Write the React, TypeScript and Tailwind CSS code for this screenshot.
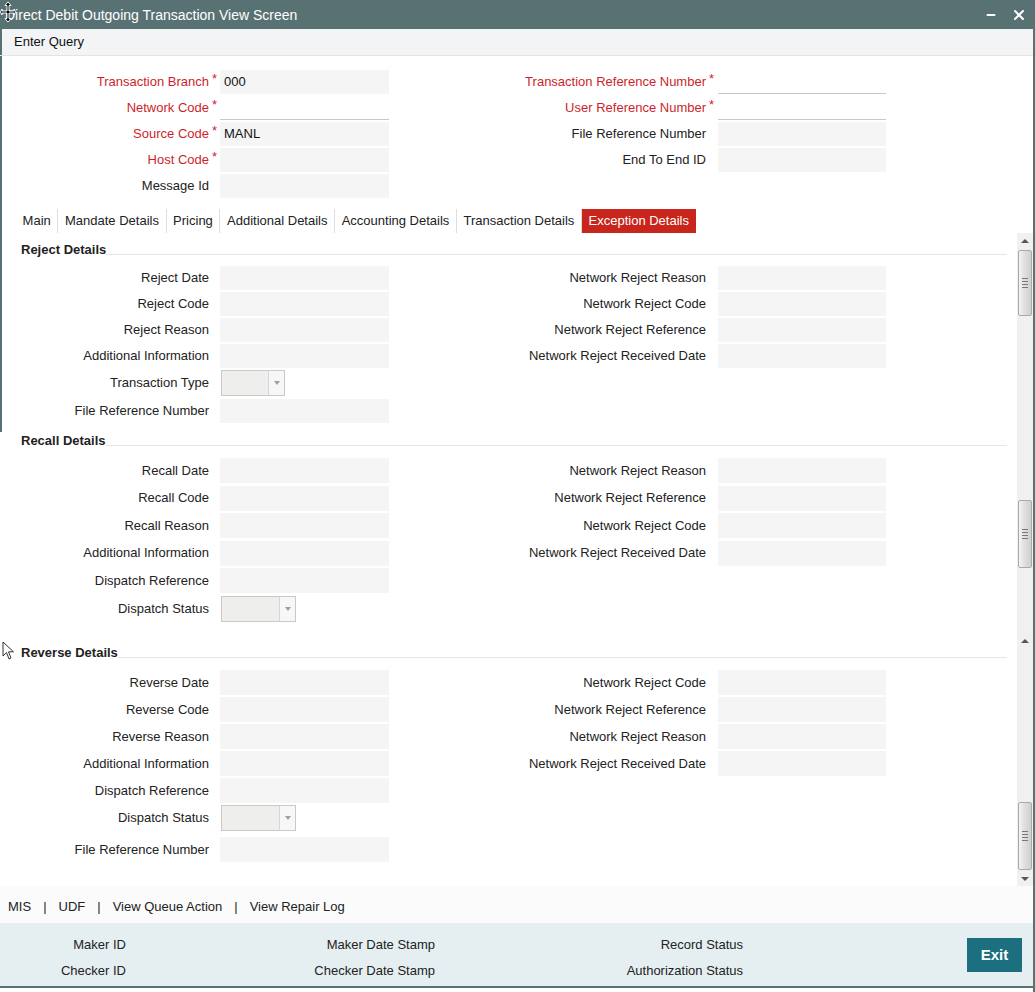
import React from "react";
import { Minus, X } from "lucide-react";

type Side = "left" | "right";

type FieldProps = {
  label: string;
  req?: boolean;
  value?: string;
  kind?: "input" | "white" | "select";
  selW?: string;
  side?: Side;
};

const Field = ({ label, req, value, kind = "input", selW = "w-[64px]", side = "left" }: FieldProps) => {
  const left = side === "left";
  return (
    <div className={`flex items-center h-full ${left ? "w-[389px]" : "w-[388px] ml-[109px]"}`}>
      <span
        className={`${left ? "w-[209px]" : "w-[208px]"} text-right whitespace-nowrap ${
          req ? "text-[#cc1f2b]" : "text-[#222]"
        }`}
      >
        {label}
      </span>
      <span className={`${left ? "w-[11px]" : "w-[12px]"} self-start pl-[3px] pt-[1px] text-[#cc1f2b] leading-[16px]`}>
        {req ? "*" : ""}
      </span>
      {kind === "select" ? (
        <div className={`${selW} h-full ml-[1px] border border-[#c9c9c9] bg-[#eeeeec] flex justify-end`}>
          <div className="w-[16px] h-full border-l border-[#d6d6d6] bg-[#f7f7f7] flex items-center justify-center">
            <div className="w-0 h-0 border-x-[3px] border-x-transparent border-t-[4px] border-t-[#a0a0a0]" />
          </div>
        </div>
      ) : kind === "white" ? (
        <div className="flex-1 h-full bg-white border-b border-[#c8c8c8]" />
      ) : (
        <div className="flex-1 h-full bg-[#f5f5f5] flex items-center pl-[4px] text-[#111]">{value}</div>
      )}
    </div>
  );
};

const Heading = ({ title, className }: { title: string; className: string }) => (
  <div className={`flex items-end pl-[21px] pr-[10px] ${className}`}>
    <span className="font-bold text-[#222] leading-[16px]">{title}</span>
    <div className="flex-1 h-px bg-[#e6e6e6] mb-[3px]" />
  </div>
);

const tabs = [
  "Main",
  "Mandate Details",
  "Pricing",
  "Additional Details",
  "Accounting Details",
  "Transaction Details",
  "Exception Details",
];

const Thumb = ({ className }: { className: string }) => (
  <div
    className={`mx-[1px] rounded-[2px] border border-[#a9a9a9] bg-gradient-to-r from-[#f4f4f4] via-[#dedede] to-[#cfcfcf] flex items-center justify-center ${className}`}
  >
    <div className="flex flex-col gap-[2px]">
      <div className="w-[6px] h-px bg-[#777]" />
      <div className="w-[6px] h-px bg-[#777]" />
      <div className="w-[6px] h-px bg-[#777]" />
      <div className="w-[6px] h-px bg-[#777]" />
    </div>
  </div>
);

const UpArrow = () => (
  <div className="h-[10px] flex items-center justify-center">
    <div className="w-0 h-0 border-x-[4px] border-x-transparent border-b-[4px] border-b-[#555]" />
  </div>
);

const DownArrow = () => (
  <div className="h-[10px] flex items-center justify-center">
    <div className="w-0 h-0 border-x-[4px] border-x-transparent border-t-[4px] border-t-[#555]" />
  </div>
);

const App = () => {
  return (
    <div className="relative w-[1035px] h-[992px] overflow-hidden bg-white flex flex-col text-[13px] font-['Liberation_Sans',Arial,sans-serif]">
      {/* title bar */}
      <div className="h-[29px] shrink-0 bg-[#587274] flex items-center justify-between pl-[5px] pr-[8px]">
        <span className="text-white text-[14px] pt-[1px]">Direct Debit Outgoing Transaction View Screen</span>
        <div className="flex items-center gap-[14px] text-white">
          <Minus size={12} strokeWidth={4} />
          <X size={16} strokeWidth={3} />
        </div>
      </div>

      <div className="flex-1 flex flex-col border-r-2 border-[#587274] min-h-0">
        <div className="shadow-[inset_2px_0_0_#587274]">
          <div className="h-[27px] bg-[#f3f4f5] border-b border-[#e4e4e4] flex items-center pl-[14px] text-[#111] shadow-[inset_2px_0_0_#587274]">
            Enter Query
          </div>

          {/* header fields */}
          <div className="pt-[14px] flex flex-col gap-[2px]">
            <div className="flex h-[24px]">
              <Field label="Transaction Branch" req value="000" />
              <Field label="Transaction Reference Number" req kind="white" side="right" />
            </div>
            <div className="flex h-[24px]">
              <Field label="Network Code" req kind="white" />
              <Field label="User Reference Number" req kind="white" side="right" />
            </div>
            <div className="flex h-[24px]">
              <Field label="Source Code" req value="MANL" />
              <Field label="File Reference Number" side="right" />
            </div>
            <div className="flex h-[24px]">
              <Field label="Host Code" req />
              <Field label="End To End ID" side="right" />
            </div>
            <div className="flex h-[24px]">
              <Field label="Message Id" />
            </div>
          </div>

          {/* tabs */}
          <div className="mt-[11px] h-[24px] flex pl-[16px]">
            {tabs.map((t, i) => (
              <React.Fragment key={t}>
                {i > 0 && <div className="w-px h-full bg-[#dedede]" />}
                <div
                  className={`px-[6.6px] h-full flex items-center ${
                    t === "Exception Details" ? "bg-[#c8261c] text-white" : "text-[#222]"
                  }`}
                >
                  {t}
                </div>
              </React.Fragment>
            ))}
          </div>
        </div>

        {/* scroll area */}
        <div className="h-[653px] shrink-0 flex">
          <div className="flex-1 flex flex-col">
            <div className="shadow-[inset_2px_0_0_#587274] pb-[9px]">
              <Heading title="Reject Details" className="pt-[9px]" />
              <div className="mt-[8px] flex flex-col gap-[2px]">
                <div className="flex h-[24px]">
                  <Field label="Reject Date" />
                  <Field label="Network Reject Reason" side="right" />
                </div>
                <div className="flex h-[24px]">
                  <Field label="Reject Code" />
                  <Field label="Network Reject Code" side="right" />
                </div>
                <div className="flex h-[24px]">
                  <Field label="Reject Reason" />
                  <Field label="Network Reject Reference" side="right" />
                </div>
                <div className="flex h-[24px]">
                  <Field label="Additional Information" />
                  <Field label="Network Reject Received Date" side="right" />
                </div>
                <div className="flex h-[26px]">
                  <Field label="Transaction Type" kind="select" selW="w-[64px]" />
                </div>
                <div className="flex h-[24px] mt-[1px]">
                  <Field label="File Reference Number" />
                </div>
              </div>
            </div>

            <Heading title="Recall Details" className="pt-[1px]" />
            <div className="mt-[9px] flex flex-col gap-[2.5px]">
              <div className="flex h-[25px]">
                <Field label="Recall Date" />
                <Field label="Network Reject Reason" side="right" />
              </div>
              <div className="flex h-[25px]">
                <Field label="Recall Code" />
                <Field label="Network Reject Reference" side="right" />
              </div>
              <div className="flex h-[25px]">
                <Field label="Recall Reason" />
                <Field label="Network Reject Code" side="right" />
              </div>
              <div className="flex h-[25px]">
                <Field label="Additional Information" />
                <Field label="Network Reject Received Date" side="right" />
              </div>
              <div className="flex h-[25px]">
                <Field label="Dispatch Reference" />
              </div>
              <div className="flex h-[26px]">
                <Field label="Dispatch Status" kind="select" selW="w-[75px]" />
              </div>
            </div>

            <Heading title="Reverse Details" className="mt-[23px]" />
            <div className="mt-[9.5px] flex flex-col gap-[2px]">
              <div className="flex h-[25px]">
                <Field label="Reverse Date" />
                <Field label="Network Reject Code" side="right" />
              </div>
              <div className="flex h-[25px]">
                <Field label="Reverse Code" />
                <Field label="Network Reject Reference" side="right" />
              </div>
              <div className="flex h-[25px]">
                <Field label="Reverse Reason" />
                <Field label="Network Reject Reason" side="right" />
              </div>
              <div className="flex h-[25px]">
                <Field label="Additional Information" />
                <Field label="Network Reject Received Date" side="right" />
              </div>
              <div className="flex h-[25px]">
                <Field label="Dispatch Reference" />
              </div>
              <div className="flex h-[26px]">
                <Field label="Dispatch Status" kind="select" selW="w-[75px]" />
              </div>
              <div className="flex h-[25px] mt-[4px]">
                <Field label="File Reference Number" />
              </div>
            </div>
          </div>

          {/* scrollbar */}
          <div className="w-[16px] h-full bg-[#f0f0f0] flex flex-col pt-[3px]">
            <UpArrow />
            <Thumb className="mt-[4px] h-[66px]" />
            <div className="h-[184px]" />
            <Thumb className="h-[68px]" />
            <div className="h-[68px]" />
            <UpArrow />
            <div className="h-[156px]" />
            <Thumb className="h-[68px]" />
            <div className="h-[4px]" />
            <DownArrow />
          </div>
        </div>

        {/* links */}
        <div className="h-[37px] shrink-0 bg-[#fbfbfb] flex items-center gap-[12px] pl-[8px] pt-[5px] text-[#222]">
          <span>MIS</span>
          <span>|</span>
          <span>UDF</span>
          <span>|</span>
          <span>View Queue Action</span>
          <span>|</span>
          <span>View Repair Log</span>
        </div>

        {/* audit panel */}
        <div className="h-[65px] shrink-0 bg-[#e5eff1] border-b-2 border-[#587274] flex text-[#222]">
          <div className="flex flex-col gap-[10px] pt-[14px] leading-[16px] text-right">
            <span className="w-[126px]">Maker ID</span>
            <span className="w-[126px]">Checker ID</span>
          </div>
          <div className="flex flex-col gap-[10px] pt-[14px] leading-[16px] text-right">
            <span className="w-[309px]">Maker Date Stamp</span>
            <span className="w-[309px]">Checker Date Stamp</span>
          </div>
          <div className="flex flex-col gap-[10px] pt-[14px] leading-[16px] text-right">
            <span className="w-[308px]">Record Status</span>
            <span className="w-[308px]">Authorization Status</span>
          </div>
          <div className="ml-auto mr-[11px] mt-[15px] w-[55px] h-[34px] bg-[#1b6f7f] text-white text-[15px] font-bold flex items-center justify-center">
            Exit
          </div>
        </div>
        <div className="flex-1" />
      </div>

      {/* mouse pointers captured in the screenshot */}
      <svg className="absolute left-[0px] top-[1px]" width="16" height="22" viewBox="0 0 16 22">
        <path
          d="M8 1 L11 4.5 L9 4.5 L9 10 L14 10 L14 8 L15.5 11 L14 14 L14 12 L9 12 L9 17.5 L11 17.5 L8 21 L5 17.5 L7 17.5 L7 12 L2 12 L2 14 L0.5 11 L2 8 L2 10 L7 10 L7 4.5 L5 4.5 Z"
          fill="#000"
          stroke="#fff"
          strokeWidth="1"
        />
      </svg>
      <svg className="absolute left-[2px] top-[641px]" width="14" height="20" viewBox="0 0 14 20">
        <path d="M1 1 L1 15 L4.5 11.5 L7 18 L9 17 L6.5 10.8 L11.5 10.8 Z" fill="#fff" stroke="#333" strokeWidth="1" />
      </svg>
    </div>
  );
};

export default App;
